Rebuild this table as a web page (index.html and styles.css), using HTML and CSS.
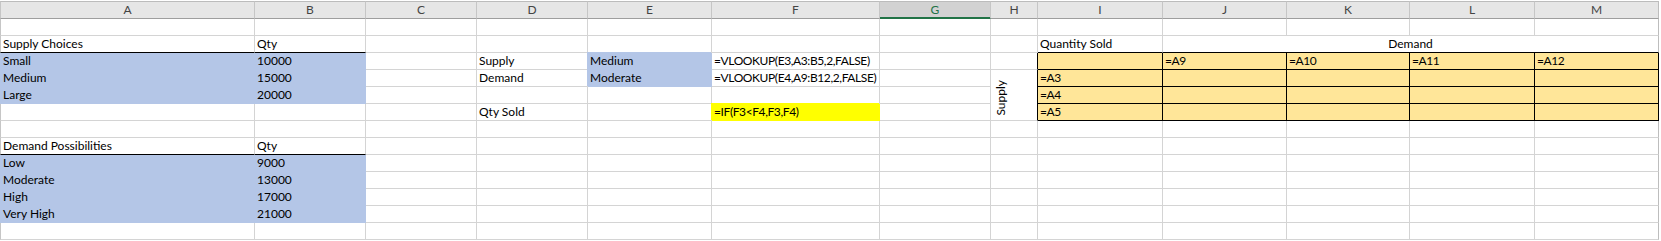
FILE: index.html
```html
<!DOCTYPE html>
<html lang="en">
<head>
  <meta charset="UTF-8">
  <title>Supply and Demand</title>
  <link rel="stylesheet" href="styles.css">
</head>
<body>
  <table class="sheet">
    <colgroup>
      <col class="col-a">
      <col class="col-std">
      <col class="col-std">
      <col class="col-std">
      <col class="col-e">
      <col class="col-f">
      <col class="col-std">
      <col class="col-h">
      <col class="col-i">
      <col class="col-j">
      <col class="col-k">
      <col class="col-l">
      <col class="col-m">
    </colgroup>
    <thead>
      <tr>
        <th>A</th><th>B</th><th>C</th><th>D</th><th>E</th><th>F</th>
        <th class="active">G</th>
        <th>H</th><th>I</th><th>J</th><th>K</th><th>L</th><th>M</th>
      </tr>
    </thead>
    <tbody>
      <!-- row 1 -->
      <tr>
        <td></td><td></td><td></td><td></td><td></td><td></td><td></td>
        <td></td><td></td><td></td><td></td><td></td><td></td>
      </tr>
      <!-- row 2: table titles -->
      <tr>
        <td class="head-line">Supply Choices</td>
        <td class="head-line">Qty</td>
        <td></td><td></td><td></td><td></td><td></td><td></td>
        <td class="head-line">Quantity Sold</td>
        <td class="head-line center" colspan="4">Demand</td>
      </tr>
      <!-- row 3 -->
      <tr>
        <td class="blue">Small</td>
        <td class="blue">10000</td>
        <td></td>
        <td>Supply</td>
        <td class="blue cover">Medium</td>
        <td class="formula">=VLOOKUP(E3,A3:B5,2,FALSE)</td>
        <td></td>
        <td class="edge"></td>
        <td class="gold"></td>
        <td class="gold formula">=A9</td>
        <td class="gold formula">=A10</td>
        <td class="gold formula">=A11</td>
        <td class="gold formula">=A12</td>
      </tr>
      <!-- row 4 -->
      <tr>
        <td class="blue">Medium</td>
        <td class="blue">15000</td>
        <td></td>
        <td>Demand</td>
        <td class="blue cover">Moderate</td>
        <td class="formula">=VLOOKUP(E4,A9:B12,2,FALSE)</td>
        <td></td>
        <td class="edge rotated" rowspan="3"><span>Supply</span></td>
        <td class="gold formula">=A3</td>
        <td class="gold"></td><td class="gold"></td><td class="gold"></td><td class="gold"></td>
      </tr>
      <!-- row 5 -->
      <tr>
        <td class="blue">Large</td>
        <td class="blue">20000</td>
        <td></td><td></td><td></td><td></td><td></td>
        <td class="gold formula">=A4</td>
        <td class="gold"></td><td class="gold"></td><td class="gold"></td><td class="gold"></td>
      </tr>
      <!-- row 6 -->
      <tr>
        <td></td><td></td><td></td>
        <td>Qty Sold</td>
        <td></td>
        <td class="yellow cover formula">=IF(F3&lt;F4,F3,F4)</td>
        <td></td>
        <td class="gold formula">=A5</td>
        <td class="gold"></td><td class="gold"></td><td class="gold"></td><td class="gold"></td>
      </tr>
      <!-- row 7 -->
      <tr>
        <td></td><td></td><td></td><td></td><td></td><td></td><td></td>
        <td></td><td></td><td></td><td></td><td></td><td></td>
      </tr>
      <!-- row 8 -->
      <tr>
        <td class="head-line">Demand Possibilities</td>
        <td class="head-line">Qty</td>
        <td></td><td></td><td></td><td></td><td></td>
        <td></td><td></td><td></td><td></td><td></td><td></td>
      </tr>
      <!-- rows 9-12 -->
      <tr>
        <td class="blue">Low</td><td class="blue">9000</td>
        <td></td><td></td><td></td><td></td><td></td>
        <td></td><td></td><td></td><td></td><td></td><td></td>
      </tr>
      <tr>
        <td class="blue">Moderate</td><td class="blue">13000</td>
        <td></td><td></td><td></td><td></td><td></td>
        <td></td><td></td><td></td><td></td><td></td><td></td>
      </tr>
      <tr>
        <td class="blue">High</td><td class="blue">17000</td>
        <td></td><td></td><td></td><td></td><td></td>
        <td></td><td></td><td></td><td></td><td></td><td></td>
      </tr>
      <tr>
        <td class="blue">Very High</td><td class="blue">21000</td>
        <td></td><td></td><td></td><td></td><td></td>
        <td></td><td></td><td></td><td></td><td></td><td></td>
      </tr>
      <!-- row 13 -->
      <tr>
        <td></td><td></td><td></td><td></td><td></td><td></td><td></td>
        <td></td><td></td><td></td><td></td><td></td><td></td>
      </tr>
    </tbody>
  </table>
</body>
</html>
```

FILE: styles.css
```css
:root {
  --grid: #d4d4d4;
  --head-bg: #e6e6e6;
  --head-line: #c6c6c6;
  --blue: #b4c6e7;
  --gold: #ffe699;
  --yellow: #ffff00;
  --excel-green: #217346;
}

body {
  margin: 0;
  background: #fff;
  font-family: Lato, "Liberation Sans", sans-serif;
  font-size: 12px;
  color: #000;
}

.sheet {
  border-collapse: separate;
  border-spacing: 0;
  table-layout: fixed;
  width: 1659px;
  margin-top: 1px;
  background: #fff;
}

.col-a { width: 255px; }
.col-std { width: 111px; }
.col-e { width: 124px; }
.col-f { width: 168px; }
.col-h { width: 47px; }
.col-i { width: 125px; }
.col-j { width: 124px; }
.col-k { width: 123px; }
.col-l { width: 125px; }
.col-m { width: 124px; }

.sheet th,
.sheet td {
  padding: 0 2px;
  border-right: 1px solid var(--grid);
  border-bottom: 1px solid var(--grid);
  line-height: 16px;
  white-space: nowrap;
  overflow: hidden;
  vertical-align: bottom;
  text-align: left;
}

.sheet th:first-child,
.sheet td:first-child {
  border-left: 1px solid var(--head-line);
}

.sheet th:last-child,
.sheet td:last-child {
  border-right-color: #bdbdbd;
}

/* column letters */
.sheet thead tr { height: 18px; }

.sheet th {
  font-weight: normal;
  text-align: center;
  color: #444;
  background: var(--head-bg);
  border-top: 1px solid #bcbcbc;
  border-right-color: var(--head-line);
  border-bottom-color: #9e9e9e;
}

.sheet th.active {
  background: #d2d2d2;
  color: var(--excel-green);
  border-bottom-color: var(--excel-green);
  box-shadow: inset 0 -1px 0 var(--excel-green);
}

.sheet tbody tr { height: 17px; }

.center { text-align: center !important; }

.formula { letter-spacing: -0.4px; }

.head-line { border-bottom-color: #000 !important; }

/* filled cells hide their own gridlines */
.blue {
  background: var(--blue);
  border-color: var(--blue) !important;
}

.yellow {
  background: var(--yellow);
  border-color: var(--yellow) !important;
}

/* ...and the neighbour's lines on the left and top */
.blue.cover { box-shadow: -1px -1px 0 var(--blue); }
.yellow.cover { box-shadow: -1px -1px 0 var(--yellow); }

.gold {
  background: var(--gold);
  border-right-color: #000 !important;
  border-bottom-color: #000 !important;
}

.edge { border-right-color: #000 !important; }

.rotated {
  vertical-align: middle;
  text-align: center;
}

.rotated span {
  display: inline-block;
  writing-mode: vertical-rl;
  transform: rotate(180deg);
}
```
